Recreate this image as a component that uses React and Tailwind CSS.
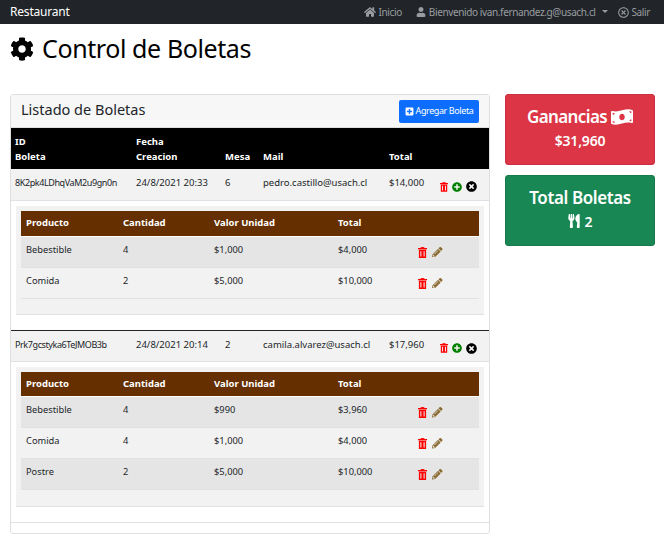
import React from 'react';
import { FaCog, FaHome, FaUser, FaRegTimesCircle, FaPlusSquare, FaMoneyBillWave, FaUtensils, FaPlusCircle, FaTimesCircle, FaPencilAlt } from 'react-icons/fa';

const boletas = [
  {
    id: '8K2pk4LDhqVaM2u9gn0n',
    fecha: '24/8/2021 20:33',
    mesa: '6',
    mail: 'pedro.castillo@usach.cl',
    total: '$14,000',
    items: [
      { producto: 'Bebestible', cantidad: '4', valor: '$1,000', total: '$4,000' },
      { producto: 'Comida', cantidad: '2', valor: '$5,000', total: '$10,000' },
    ],
  },
  {
    id: 'Prk7gcstyka6TeJMOB3b',
    fecha: '24/8/2021 20:14',
    mesa: '2',
    mail: 'camila.alvarez@usach.cl',
    total: '$17,960',
    items: [
      { producto: 'Bebestible', cantidad: '4', valor: '$990', total: '$3,960' },
      { producto: 'Comida', cantidad: '4', valor: '$1,000', total: '$4,000' },
      { producto: 'Postre', cantidad: '2', valor: '$5,000', total: '$10,000' },
    ],
  },
];

// trash with lid and two slots, the icon packs' versions fill in at this size
const Trash = ({ className }) => (
  <svg viewBox="0 0 10 12" fill="#ff0000" className={className}>
    <rect x="3" y="0" width="4" height="1" />
    <rect x="0" y="1" width="10" height="1.5" />
    <path fillRule="evenodd" d="M1 3h8v9H1z M2.6 4.5v6h1.2v-6z M6.2 4.5v6h1.2v-6z" />
  </svg>
);

const Navbar = () => (
  <nav className="h-6 bg-[#212529] flex items-center justify-between pl-[10px] pr-[14px]">
    <span className="text-white text-[12px] tracking-[-0.2px]">Restaurant</span>
    <div className="flex items-center text-[#9a9da0] text-[10px] tracking-[-0.38px]">
      <FaHome className="text-[12px] mr-[3px]" />
      <span>Inicio</span>
      <FaUser className="text-[10px] ml-[14px] mr-[3px]" />
      <span>Bienvenido ivan.fernandez.g@usach.cl</span>
      <span className="ml-[6px] mb-[2px] border-x-[3px] border-t-[3px] border-x-transparent border-t-[#9a9da0]" />
      <FaRegTimesCircle className="text-[11px] ml-[10px] mr-[3px]" />
      <span>Salir</span>
    </div>
  </nav>
);

const Detalle = ({ items, last }) => (
  <div className={`bg-[#f2f2f2] border-b border-[#dee2e6] mx-[5px] mt-[5px] p-[5px] ${last ? 'pb-[16px]' : 'pb-[15px]'}`}>
    <table className="w-full table-fixed border-collapse text-[9.3px]">
      <colgroup>
        <col className="w-[97px]" />
        <col className="w-[91px]" />
        <col className="w-[124px]" />
        <col className="w-[80px]" />
        <col />
      </colgroup>
      <thead>
        <tr className="h-[25px] bg-[#662f00] text-white text-[9.5px]">
          <th className="text-left pl-[5px] font-bold">Producto</th>
          <th className="text-left pl-[5px] font-bold">Cantidad</th>
          <th className="text-left pl-[5px] font-bold">Valor Unidad</th>
          <th className="text-left pl-[5px] font-bold">Total</th>
          <th />
        </tr>
      </thead>
      <tbody className="border-t border-white text-[#212529]">
        {items.map((item, i) => (
          <tr key={item.producto} className={`h-[31px] border-b border-[#dee2e6] ${i % 2 === 0 ? 'bg-[#e5e5e5]' : 'bg-[#f2f2f2]'}`}>
            <td className="pl-[5px] align-top pt-[6px]">{item.producto}</td>
            <td className="pl-[5px] align-top pt-[6px]">{item.cantidad}</td>
            <td className="pl-[5px] align-top pt-[6px]">{item.valor}</td>
            <td className="pl-[5px] align-top pt-[6px]">{item.total}</td>
            <td className="align-top pt-[10px]">
              <div className="flex items-center gap-[5px] pl-[5px]">
                <Trash className="w-[9px] h-[11px]" />
                <FaPencilAlt className="text-[10.5px] text-[#8a6a30]" />
              </div>
            </td>
          </tr>
        ))}
      </tbody>
    </table>
  </div>
);

const Boleta = ({ boleta, first, last }) => (
  <div className={last ? 'border-b border-[#dee2e6] pb-[15px]' : 'border-b border-[#212529] pb-[15px]'}>
    <div className={`${first ? 'h-[32px]' : 'h-[31px]'} bg-[#f2f2f2] border-b border-[#dee2e6] flex text-[9.5px] text-[#212529] pt-[7px]`}>
      <span className="w-[125px] pl-[4px] text-[9px] tracking-[-0.4px] whitespace-nowrap">{boleta.id}</span>
      <span className="w-[89px] whitespace-nowrap">{boleta.fecha}</span>
      <span className="w-[38px]">{boleta.mesa}</span>
      <span className="w-[126px] whitespace-nowrap">{boleta.mail}</span>
      <span className="w-[51px]">{boleta.total}</span>
      <div className="flex items-center gap-[4px] h-[20px] pt-[1px]">
        <Trash className="w-[8px] h-[10px]" />
        <FaPlusCircle className="text-[10px] text-[#008000]" />
        <FaTimesCircle className="text-[11px] text-black" />
      </div>
    </div>
    <Detalle items={boleta.items} last={last} />
  </div>
);

const App = () => {
  return (
    <div className="bg-white h-[544px] overflow-hidden text-black" style={{ fontFamily: '"Noto Sans", sans-serif' }}>
      <Navbar />

      <h1 className="flex items-center h-[50px] pl-[10px] text-[25px] tracking-[-0.4px] text-black">
        <FaCog className="text-[24px] mr-[8px]" />
        Control de Boletas
      </h1>

      <div className="flex gap-[15px] pl-[10px] mt-[20px]">
        <div className="w-[480px] h-[440px] shrink-0 border border-[#dfdfdf] rounded-[3px] flex flex-col">
          <div className="h-[33px] shrink-0 bg-[#f7f7f7] border-b border-[#dfdfdf] flex items-center justify-between pl-[10px] pr-[10px]">
            <span className="text-[14.5px] text-[#212529] pb-[2px]">Listado de Boletas</span>
            <button className="h-[23px] w-[80px] bg-[#0d6efd] rounded-[2px] text-white text-[9px] tracking-[-0.4px] flex items-center justify-center gap-[2px] whitespace-nowrap">
              <FaPlusSquare className="text-[9px]" />
              Agregar Boleta
            </button>
          </div>

          <div className="h-[41px] shrink-0 bg-black text-white font-bold text-[9.5px] leading-[15px] flex items-end pb-[5px]">
            <div className="w-[125px] pl-[4px]">ID<br />Boleta</div>
            <div className="w-[89px]">Fecha<br />Creacion</div>
            <div className="w-[38px]">Mesa</div>
            <div className="w-[126px]">Mail</div>
            <div>Total</div>
          </div>

          {boletas.map((boleta, i) => (
            <Boleta key={boleta.id} boleta={boleta} first={i === 0} last={i === boletas.length - 1} />
          ))}
        </div>

        <div className="w-[150px] shrink-0 flex flex-col gap-[10px] text-white text-center font-semibold">
          <div className="h-[71px] bg-[#dc3545] border border-[#c9303f] rounded-[3px] flex flex-col items-center justify-center pb-[3px]">
            <div className="flex items-center gap-[4px] text-[17px] tracking-[-0.6px] leading-[24px]">
              Ganancias <FaMoneyBillWave className="text-[22px]" />
            </div>
            <div className="text-[14px] tracking-[-0.2px] leading-[23px]">$31,960</div>
          </div>
          <div className="h-[71px] bg-[#198754] border border-[#17794c] rounded-[3px] flex flex-col items-center justify-center pb-[3px]">
            <div className="text-[17px] tracking-[-0.4px] leading-[24px]">Total Boletas</div>
            <div className="flex items-center gap-[3px] text-[14px] leading-[23px]">
              <FaUtensils className="text-[14px]" /> 2
            </div>
          </div>
        </div>
      </div>
    </div>
  );
};

export default App;
